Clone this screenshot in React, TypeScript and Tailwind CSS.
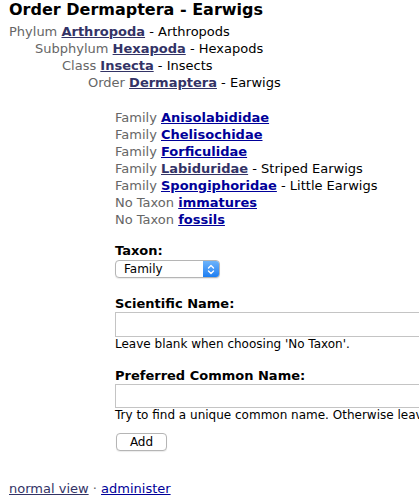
import React from 'react';

const gray = 'text-[#666666]';
const visited = 'font-bold text-[#333366] underline';
const fresh = 'font-bold text-[#000099] underline';

function Rank({ rank, name, common, cls, indent }: { rank: string; name: string; common?: string; cls: string; indent: string }) {
  return (
    <div className={`${indent} h-[17px] leading-[17px] whitespace-nowrap`}>
      <span className={gray}>{rank} </span>
      <a href="#" className={cls}>{name}</a>
      {common && <span> - {common}</span>}
    </div>
  );
}

function SelectBox() {
  return (
    <div className="flex h-[18px] w-[105px] items-stretch rounded-[4px] border border-[#b5b5b5] bg-white shadow-[0_1px_1px_rgba(0,0,0,0.08)]">
      <span className="flex-1 pl-[8px] text-[12px] leading-[16px]">Family</span>
      <span className="flex w-[16px] items-center justify-center rounded-r-[3px] bg-gradient-to-b from-[#6cb3fa] to-[#1a7ef2]">
        <svg width="8" height="11" viewBox="0 0 8 11" fill="none" stroke="white" strokeWidth="1.4" strokeLinecap="round" strokeLinejoin="round">
          <path d="M1.5 4 L4 1.5 L6.5 4" />
          <path d="M1.5 7 L4 9.5 L6.5 7" />
        </svg>
      </span>
    </div>
  );
}

export default function App() {
  return (
    <div className="h-[501px] w-[419px] overflow-hidden bg-white text-[13px] text-black" style={{ fontFamily: '"DejaVu Sans", Verdana, sans-serif' }}>
      <h1 className="pl-[9px] text-[16px] font-bold leading-[20px]">Order Dermaptera - Earwigs</h1>
      <div className="mt-[3px] pl-[9px]">
        <Rank rank="Phylum" name="Arthropoda" common="Arthropods" cls={visited} indent="pl-0" />
        <Rank rank="Subphylum" name="Hexapoda" common="Hexapods" cls={visited} indent="pl-[26px]" />
        <Rank rank="Class" name="Insecta" common="Insects" cls={visited} indent="pl-[53px]" />
        <Rank rank="Order" name="Dermaptera" common="Earwigs" cls={visited} indent="pl-[79px]" />
      </div>

      <div className="mt-[18px] pl-[115px]">
        <Rank rank="Family" name="Anisolabididae" cls={fresh} indent="pl-0" />
        <Rank rank="Family" name="Chelisochidae" cls={fresh} indent="pl-0" />
        <Rank rank="Family" name="Forficulidae" cls={fresh} indent="pl-0" />
        <Rank rank="Family" name="Labiduridae" common="Striped Earwigs" cls={visited} indent="pl-0" />
        <Rank rank="Family" name="Spongiphoridae" common="Little Earwigs" cls={fresh} indent="pl-0" />
        <Rank rank="No Taxon" name="immatures" cls={fresh} indent="pl-0" />
        <Rank rank="No Taxon" name="fossils" cls={fresh} indent="pl-0" />

        <div className="mt-[14px] font-bold leading-[17px]">Taxon:</div>
        <div className="mt-[1px]">
          <SelectBox />
        </div>

        <div className="mt-[17px] font-bold leading-[17px]">Scientific Name:</div>
        <div className="h-[25px] w-[330px] border border-[#c4c4c4] bg-white" />
        <div className="whitespace-nowrap text-[12px] leading-[15px]">Leave blank when choosing 'No Taxon'.</div>

        <div className="mt-[15px] font-bold leading-[17px]">Preferred Common Name:</div>
        <div className="h-[24px] w-[330px] border border-[#c4c4c4] bg-white" />
        <div className="whitespace-nowrap text-[12px] leading-[15px]">Try to find a unique common name. Otherwise leave this field blank.</div>

        <button className="mt-[10px] ml-[1px] h-[18px] w-[51px] rounded-[4px] border border-[#b5b5b5] bg-white text-[12px] leading-[16px] shadow-[0_1px_1px_rgba(0,0,0,0.08)]">Add</button>
      </div>

      <div className="mt-[28px] pl-[9px] leading-[17px]">
        <a href="#" className="text-[#333366] underline">normal view</a>
        <span className={gray}> · </span>
        <a href="#" className="text-[#000099] underline">administer</a>
      </div>
    </div>
  );
}
